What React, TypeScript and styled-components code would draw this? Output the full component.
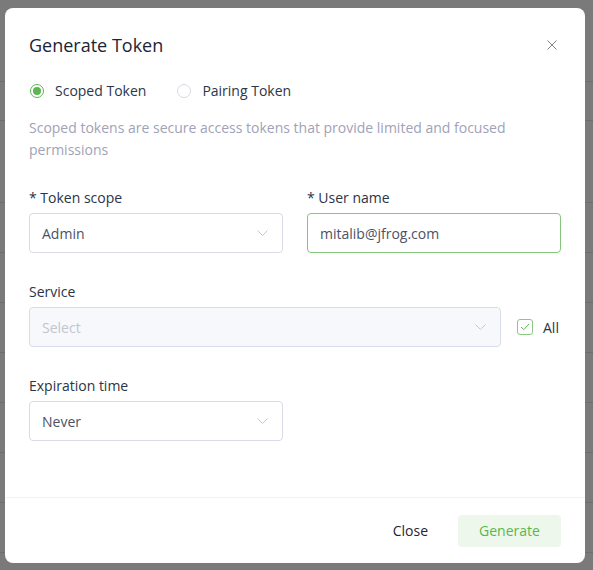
import React from 'react';
import styled, {createGlobalStyle} from "styled-components";

const GlobalStyle = createGlobalStyle`
    html, body {
        margin: 0;
        padding: 0;
        background: #7a7a7a;
        font-family: "Open Sans", "Noto Sans", sans-serif;
    }
`

// rows of the table that sits behind the backdrop
const rowLines = [81, 120, 202, 252, 302, 352, 402, 452, 502, 552]

const lineGradients = rowLines
    .map(y => `linear-gradient(to bottom, transparent ${y}px, #6d6d6d ${y}px, #6d6d6d ${y + 1}px, transparent ${y + 1}px)`)
    .join(', ')

const Chevron = () => (
    <svg width="11" height="6" viewBox="0 0 11 6" fill="none">
        <path d="M0.5 0.5L5.5 5.5L10.5 0.5" stroke="#c5c8d4" strokeWidth="1"/>
    </svg>
)

export default function App() {
    return (
        <>
            <GlobalStyle/>
            <Backdrop>
                <Modal>
                    <Header>
                        <Title>Generate Token</Title>
                        <CloseIcon aria-label="close">
                            <svg width="10" height="10" viewBox="0 0 10 10">
                                <path d="M0.5 0.5L9.5 9.5M9.5 0.5L0.5 9.5" stroke="#858585" strokeWidth="1"/>
                            </svg>
                        </CloseIcon>
                    </Header>

                    <Body>
                        <RadioGroup>
                            <RadioOption>
                                <Radio checked/>
                                Scoped Token
                            </RadioOption>
                            <RadioOption>
                                <Radio/>
                                Pairing Token
                            </RadioOption>
                        </RadioGroup>

                        <Description>
                            Scoped tokens are secure access tokens that provide limited and focused permissions
                        </Description>

                        <Form>
                            <FieldRow>
                                <Field>
                                    <Label>* Token scope</Label>
                                    <SelectBox>
                                        <span>Admin</span>
                                        <Chevron/>
                                    </SelectBox>
                                </Field>
                                <Field>
                                    <Label>* User name</Label>
                                    <InputBox focused>mitalib@jfrog.com</InputBox>
                                </Field>
                            </FieldRow>

                            <Field>
                                <Label>Service</Label>
                                <ServiceRow>
                                    <SelectBox disabled grow>
                                        <Placeholder>Select</Placeholder>
                                        <Chevron/>
                                    </SelectBox>
                                    <CheckLabel>
                                        <CheckBox>
                                            <svg width="10" height="8" viewBox="0 0 10 8" fill="none">
                                                <path d="M1 4L3.8 6.6L9 1" stroke="#5cb551" strokeWidth="1"/>
                                            </svg>
                                        </CheckBox>
                                        All
                                    </CheckLabel>
                                </ServiceRow>
                            </Field>

                            <Field narrow>
                                <Label>Expiration time</Label>
                                <SelectBox>
                                    <span>Never</span>
                                    <Chevron/>
                                </SelectBox>
                            </Field>
                        </Form>
                    </Body>

                    <Footer>
                        <TextButton>Close</TextButton>
                        <PrimaryButton>Generate</PrimaryButton>
                    </Footer>
                </Modal>
            </Backdrop>
        </>
    );
}

const Backdrop = styled.div`
    width: 593px;
    height: 570px;
    background-color: #7a7a7a;
    background-image: ${lineGradients};
    padding: 8px 8px 0 5px;
    box-sizing: border-box;
`

const Modal = styled.div`
    width: 580px;
    height: 555px;
    background: #fff;
    border-radius: 8px;
    display: flex;
    flex-direction: column;
    box-sizing: border-box;
`

const Header = styled.div`
    display: flex;
    align-items: center;
    justify-content: space-between;
    padding: 24px 24px 0 24px;
`

const Title = styled.h2`
    margin: 0;
    font-size: 18px;
    line-height: 26px;
    font-weight: 400;
    color: #1c2536;
`

const CloseIcon = styled.button`
    border: none;
    background: none;
    padding: 0;
    margin-right: 4px;
    display: flex;
    cursor: pointer;
`

const Body = styled.div`
    flex: 1;
    padding: 23px 24px 0 24px;
    display: flex;
    flex-direction: column;
`

const RadioGroup = styled.div`
    display: flex;
    gap: 31px;
    margin-left: 1px;
`

const RadioOption = styled.label`
    display: flex;
    align-items: center;
    gap: 11px;
    font-size: 14px;
    line-height: 20px;
    color: #2d3648;
    cursor: pointer;
`

const Radio = styled.span<{ checked?: boolean }>`
    width: 14px;
    height: 14px;
    border-radius: 50%;
    box-sizing: border-box;
    border: 1px solid ${p => p.checked ? "#5cb551" : "#d6d9e4"};
    display: flex;
    align-items: center;
    justify-content: center;

    &::after {
        content: '';
        width: 8px;
        height: 8px;
        border-radius: 50%;
        background: #5cb551;
        display: ${p => p.checked ? "block" : "none"};
    }
`

const Description = styled.p`
    margin: 16px 0 0 0;
    font-size: 14px;
    line-height: 22px;
    color: #9fa2b8;
    max-width: 500px;
`

const Form = styled.div`
    display: flex;
    flex-direction: column;
    gap: 29px;
    margin-top: 27px;
`

const FieldRow = styled.div`
    display: grid;
    grid-template-columns: 254px 254px;
    gap: 24px;
`

const Field = styled.div<{ narrow?: boolean }>`
    display: flex;
    flex-direction: column;
    width: ${p => p.narrow ? "254px" : "auto"};
`

const Label = styled.label`
    font-size: 14px;
    line-height: 20px;
    color: #2b3446;
    margin-bottom: 5px;
`

const SelectBox = styled.div<{ disabled?: boolean; grow?: boolean }>`
    flex: ${p => p.grow ? 1 : "none"};
    height: 40px;
    box-sizing: border-box;
    border: 1px solid #d9dce8;
    border-radius: 4px;
    background: ${p => p.disabled ? "#f7f8fb" : "#fff"};
    display: flex;
    align-items: center;
    justify-content: space-between;
    padding: 0 14px 0 12px;
    font-size: 14px;
    color: #4b5264;
`

const Placeholder = styled.span`
    color: #c2c5d1;
`

const InputBox = styled.div<{ focused?: boolean }>`
    height: 40px;
    box-sizing: border-box;
    border: 1px solid ${p => p.focused ? "#88c67f" : "#d9dce8"};
    border-radius: 4px;
    display: flex;
    align-items: center;
    padding: 0 12px;
    font-size: 14px;
    color: #4b5264;
`

const ServiceRow = styled.div`
    display: flex;
    align-items: center;
`

const CheckLabel = styled.label`
    width: 44px;
    display: flex;
    align-items: center;
    gap: 10px;
    margin-left: 16px;
    font-size: 14px;
    color: #2b3446;
`

const CheckBox = styled.span`
    width: 16px;
    height: 16px;
    flex: none;
    box-sizing: border-box;
    border: 1px solid #8cc884;
    border-radius: 3px;
    display: flex;
    align-items: center;
    justify-content: center;
`

const Footer = styled.div`
    height: 66px;
    border-top: 1px solid #f0f1f4;
    display: flex;
    align-items: center;
    justify-content: flex-end;
    gap: 14px;
    padding: 0 24px;
    box-sizing: border-box;
`

const TextButton = styled.button`
    border: none;
    background: none;
    font-family: inherit;
    font-size: 14px;
    color: #1f2533;
    padding: 0 16px;
    height: 32px;
    cursor: pointer;
`

const PrimaryButton = styled.button`
    border: none;
    border-radius: 4px;
    background: #edf7ec;
    font-family: inherit;
    font-size: 14px;
    color: #58b84c;
    width: 103px;
    height: 32px;
    cursor: pointer;
`
